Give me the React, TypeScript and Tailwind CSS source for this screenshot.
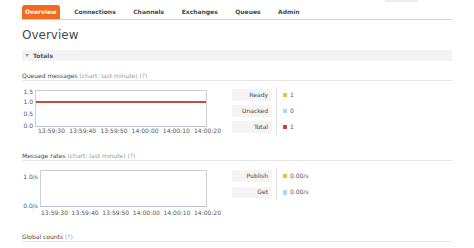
import React from "react";

const tabs = ["Connections", "Channels", "Exchanges", "Queues", "Admin"];
const times = ["13:59:30", "13:59:40", "13:59:50", "14:00:00", "14:00:10", "14:00:20"];

function Legend({ rows, gap, height }: { rows: { label: string; color: string; value: string }[]; gap: string; height: string }) {
  return (
    <div className={`flex ml-[10px] ${height}`}>
      <div className={`flex flex-col pt-[2px] ${gap}`}>
        {rows.map((r) => (
          <div key={r.label} className="w-[40px] h-[11.5px] bg-[#f4f4f4] flex items-center justify-end pr-[4px] text-[6px] leading-none text-[#444]">
            {r.label}
          </div>
        ))}
      </div>
      <div className="ml-[4px] border-l border-[#e2e2e2]" />
      <div className={`flex flex-col pt-[2px] pl-[5.5px] ${gap}`}>
        {rows.map((r) => (
          <div key={r.label} className="h-[11.5px] flex items-center gap-[3px] text-[6px] leading-none text-[#555]">
            <span className="w-[4.5px] h-[4.5px] inline-block" style={{ background: r.color }} />
            <span>{r.value}</span>
          </div>
        ))}
      </div>
    </div>
  );
}

function SectionTitle({ title, extra }: { title: string; extra: string }) {
  return (
    <div className="text-[6px] leading-[8px] border-b border-[#e6e6e6] text-[#444]">
      {title} <span className="text-[#999]">{extra}</span>
    </div>
  );
}

export default function App() {
  return (
    <div className="relative w-[474px] h-[248px] overflow-hidden bg-white text-[#484848] [font-family:'DejaVu_Sans',Verdana,sans-serif]">
      <div className="absolute left-[385px] top-0 w-[33px] h-[2px] bg-[#ececec]" />
      <div className="px-[22px]">
        {/* tabs */}
        <div className="flex items-end gap-[11.5px] pt-[5px] border-b border-[#f8cb92]">
          <div className="h-[14px] px-[3px] flex items-center rounded-t-[3px] bg-[#f26a22] text-white text-[6px] font-bold leading-none">
            Overview
          </div>
          {tabs.map((t) => (
            <div key={t} className="h-[14px] px-[3px] flex items-center text-[6px] font-bold leading-none text-[#484848]">
              {t}
            </div>
          ))}
        </div>

        <h1 className="mt-[8px] text-[12px] leading-[14px] font-normal text-[#4a4a4a]">Overview</h1>

        <div className="mt-[8px] h-[11px] bg-[#f3f3f3] flex items-center pl-[3px] gap-[4px]">
          <svg width="4" height="3" viewBox="0 0 4 3">
            <path d="M0 0 L4 0 L2 3 Z" fill="#9a9a9a" />
          </svg>
          <span className="text-[6px] font-bold leading-none text-[#555]">Totals</span>
        </div>

        <div className="mt-[11px]">
          <SectionTitle title="Queued messages" extra="(chart: last minute) (?)" />
        </div>

        {/* row 1 */}
        <div className="mt-[6px] flex items-start">
          <div className="relative w-[200px] h-[48px] shrink-0 text-[6px] leading-[8px] text-[#555]">
            <div className="absolute left-[13px] top-[3px] w-[172px] h-[37px] border border-[#cfcfcf] border-b-[#b8c5d4] bg-white">
              <div className="absolute left-0 right-0 top-[9.5px] h-[2px] bg-[#c9483f]" />
            </div>
            <div className="absolute left-0 w-[11px] text-right top-[1px]">1.5</div>
            <div className="absolute left-0 w-[11px] text-right top-[11px]">1.0</div>
            <div className="absolute left-0 w-[11px] text-right top-[23px]">0.5</div>
            <div className="absolute left-0 w-[11px] text-right top-[35px]">0.0</div>
            <div className="absolute left-[16px] right-[1px] top-[40px] flex justify-between">
              {times.map((t) => (
                <span key={t}>{t}</span>
              ))}
            </div>
          </div>
          <Legend
            gap="gap-[4.5px]"
            height="h-[48px]"
            rows={[
              { label: "Ready", color: "#e8c23f", value: "1" },
              { label: "Unacked", color: "#afd8f8", value: "0" },
              { label: "Total", color: "#c8403f", value: "1" },
            ]}
          />
        </div>

        <div className="mt-[17px]">
          <SectionTitle title="Message rates" extra="(chart: last minute) (?)" />
        </div>

        {/* row 2 */}
        <div className="mt-[7px] flex items-start">
          <div className="relative w-[200px] h-[50px] shrink-0 text-[6px] leading-[8px] text-[#555]">
            <div className="absolute left-[18px] top-[2px] w-[167px] h-[37px] border border-[#cfcfcf] border-b-[#b8c5d4] bg-white" />
            <div className="absolute left-0 w-[16px] text-right top-[5px]">1.0/s</div>
            <div className="absolute left-0 w-[16px] text-right top-[34px]">0.0/s</div>
            <div className="absolute left-[19px] right-[1px] top-[41px] flex justify-between">
              {times.map((t) => (
                <span key={t}>{t}</span>
              ))}
            </div>
          </div>
          <Legend
            gap="gap-[5px]"
            height="h-[32px]"
            rows={[
              { label: "Publish", color: "#e8c23f", value: "0.00/s" },
              { label: "Get", color: "#afd8f8", value: "0.00/s" },
            ]}
          />
        </div>

        <div className="mt-[15px]">
          <SectionTitle title="Global counts" extra="(?)" />
        </div>
      </div>
    </div>
  );
}
